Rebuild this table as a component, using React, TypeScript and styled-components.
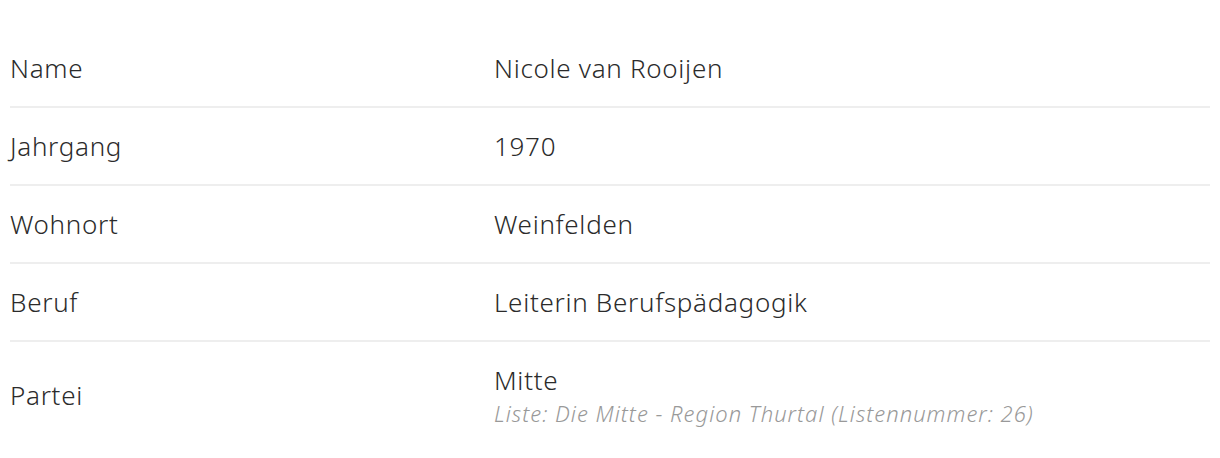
import React from "react";
import styled, { createGlobalStyle } from "styled-components";

const Global = createGlobalStyle`
  html, body { margin: 0; padding: 0; background: #fff; }
  body { font-family: "Noto Sans", "Open Sans", sans-serif; color: #2b2b2b; }
`;

const Wrapper = styled.div`
  padding: 30px 10px 0 10px;
`;

const Table = styled.div`
  display: flex;
  flex-direction: column;
`;

const Row = styled.div<{ $last?: boolean }>`
  display: grid;
  grid-template-columns: 484px 1fr;
  align-items: center;
  min-height: 76px;
  border-bottom: ${(p) => (p.$last ? "none" : "2px solid #eeeeee")};
  padding: ${(p) => (p.$last ? "15px 0" : "0")};
`;

const Label = styled.div`
  font-size: 26px;
  font-weight: 300;
  letter-spacing: 0.7px;
  line-height: 32px;
  color: #2b2b2b;
`;

const Value = styled.div`
  font-size: 26px;
  font-weight: 300;
  letter-spacing: 0.7px;
  line-height: 32px;
  color: #2b2b2b;
`;

const Sub = styled.div`
  margin-top: 3px;
  font-size: 22px;
  font-weight: 300;
  line-height: 28px;
  letter-spacing: 1px;
  font-style: italic;
  color: #999;
`;

const rows = [
  ["Name", "Nicole van Rooijen"],
  ["Jahrgang", "1970"],
  ["Wohnort", "Weinfelden"],
  ["Beruf", "Leiterin Berufspädagogik"],
];

export default function App() {
  return (
    <>
      <Global />
      <Wrapper>
        <Table>
          {rows.map(([l, v]) => (
            <Row key={l}>
              <Label>{l}</Label>
              <Value>{v}</Value>
            </Row>
          ))}
          <Row $last>
            <Label>Partei</Label>
            <div>
              <Value>Mitte</Value>
              <Sub>Liste: Die Mitte - Region Thurtal (Listennummer: 26)</Sub>
            </div>
          </Row>
        </Table>
      </Wrapper>
    </>
  );
}
